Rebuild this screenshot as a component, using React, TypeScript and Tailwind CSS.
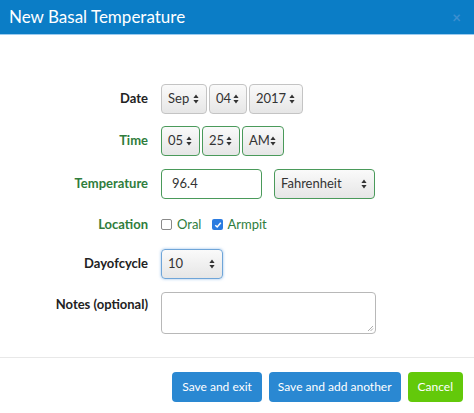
import React from 'react';

const font = { fontFamily: 'Lato, "Open Sans", Arial, sans-serif' };

// select-like box with the small up/down arrows on the right
const Arrows = () => (
  <svg width="6" height="10" viewBox="0 0 6 10" className="shrink-0">
    <path d="M3 0.5 L5.6 4 H0.4 Z M3 9.5 L5.6 6 H0.4 Z" fill="#333" />
  </svg>
);

const Select = ({
  value,
  width,
  tone = 'gray',
}: {
  value: string;
  width: string;
  tone?: 'gray' | 'green' | 'blue';
}) => {
  const border =
    tone === 'green'
      ? 'border-[#4a9a5a]'
      : tone === 'blue'
      ? 'border-[#6fa5d8] shadow-[0_0_3px_rgba(80,150,220,0.6)]'
      : 'border-[#c4c4c4]';
  return (
    <div
      className={`${width} h-[30px] flex items-center justify-between pl-[6px] pr-[7px] rounded-[4px] border ${border} bg-gradient-to-b from-[#fafafa] to-[#e6e6e6] text-[13px] text-[#333]`}
    >
      <span>{value}</span>
      <Arrows />
    </div>
  );
};

const Row = ({
  label,
  green,
  children,
  className = '',
  labelClass = '',
}: {
  label: string;
  green?: boolean;
  children: React.ReactNode;
  className?: string;
  labelClass?: string;
}) => (
  <div className={`flex ${className}`}>
    <div
      className={`w-[161px] shrink-0 pr-[13px] text-right text-[13px] font-bold ${
        green ? 'text-[#2f7d3c]' : 'text-[#222]'
      } ${labelClass}`}
    >
      {label}
    </div>
    <div className="flex items-center">{children}</div>
  </div>
);

export default function App() {
  return (
    <div className="w-[474px] h-[413px] bg-white overflow-hidden" style={font}>
      {/* header */}
      <div className="h-[35px] bg-[#0b7dc6] border-b border-[#9ccbef] flex items-center justify-between pl-[9px] pr-[13px]">
        <span className="text-white text-[17px]">New Basal Temperature</span>
        <span className="text-[#3c8fd0] text-[15px] font-bold leading-none">×</span>
      </div>

      <div className="pt-[49px]">
        <Row label="Date" className="items-center">
          <div className="flex gap-[2px]">
            <Select value="Sep" width="w-[46px]" />
            <Select value="04" width="w-[38px]" />
            <Select value="2017" width="w-[54px]" />
          </div>
        </Row>

        <Row label="Time" green className="items-center mt-[12px]">
          <div className="flex gap-[2px]">
            <Select value="05" width="w-[39px]" tone="green" />
            <Select value="25" width="w-[38px]" tone="green" />
            <Select value="AM" width="w-[42px]" tone="green" />
          </div>
        </Row>

        <Row label="Temperature" green className="items-center mt-[13px]">
          <div className="w-[101px] h-[30px] flex items-center px-[10px] rounded-[4px] border border-[#4a9a5a] text-[13px] text-[#333]">
            96.4
          </div>
          <div className="ml-[12px]">
            <Select value="Fahrenheit" width="w-[101px]" tone="green" />
          </div>
        </Row>

        <Row label="Location" green className="items-center mt-[16px]">
          <label className="flex items-center text-[13px] text-[#2f7d3c]">
            <span className="w-[11px] h-[11px] rounded-[2px] border border-[#8a8a8a] bg-white" />
            <span className="ml-[5px]">Oral</span>
          </label>
          <label className="flex items-center ml-[11px] text-[13px] text-[#2f7d3c]">
            <span className="w-[11px] h-[11px] rounded-[2px] bg-[#2a7be0] flex items-center justify-center">
              <svg width="8" height="8" viewBox="0 0 8 8">
                <path d="M1.3 4.2 L3.2 6 L6.8 1.8" stroke="white" strokeWidth="1.5" fill="none" />
              </svg>
            </span>
            <span className="ml-[4px]">Armpit</span>
          </label>
        </Row>

        <Row label="Dayofcycle" className="items-center mt-[14px]">
          <Select value="10" width="w-[62px]" tone="blue" />
        </Row>

        <Row label="Notes (optional)" className="items-start mt-[13px]" labelClass="pt-[3px]">
          <div className="relative w-[215px] h-[42px] rounded-[4px] border border-[#b8b8b8] bg-white">
            <svg width="7" height="7" viewBox="0 0 7 7" className="absolute right-[1px] bottom-[1px]">
              <path d="M6 1 L1 6 M6 3.5 L3.5 6" stroke="#999" strokeWidth="0.8" />
            </svg>
          </div>
        </Row>

        {/* footer */}
        <div className="mt-[23px] border-t border-[#e8e8e8] pt-[14px] pr-[11px] flex justify-end gap-[7px]">
          <button className="h-[30px] px-[10px] rounded-[4px] bg-[#2a88d2] text-white text-[12px]">Save and exit</button>
          <button className="h-[30px] px-[9px] rounded-[4px] bg-[#2a88d2] text-white text-[12px]">Save and add another</button>
          <button className="h-[30px] px-[10px] rounded-[4px] bg-[#63c90a] text-white text-[12px]">Cancel</button>
        </div>
      </div>
    </div>
  );
}
